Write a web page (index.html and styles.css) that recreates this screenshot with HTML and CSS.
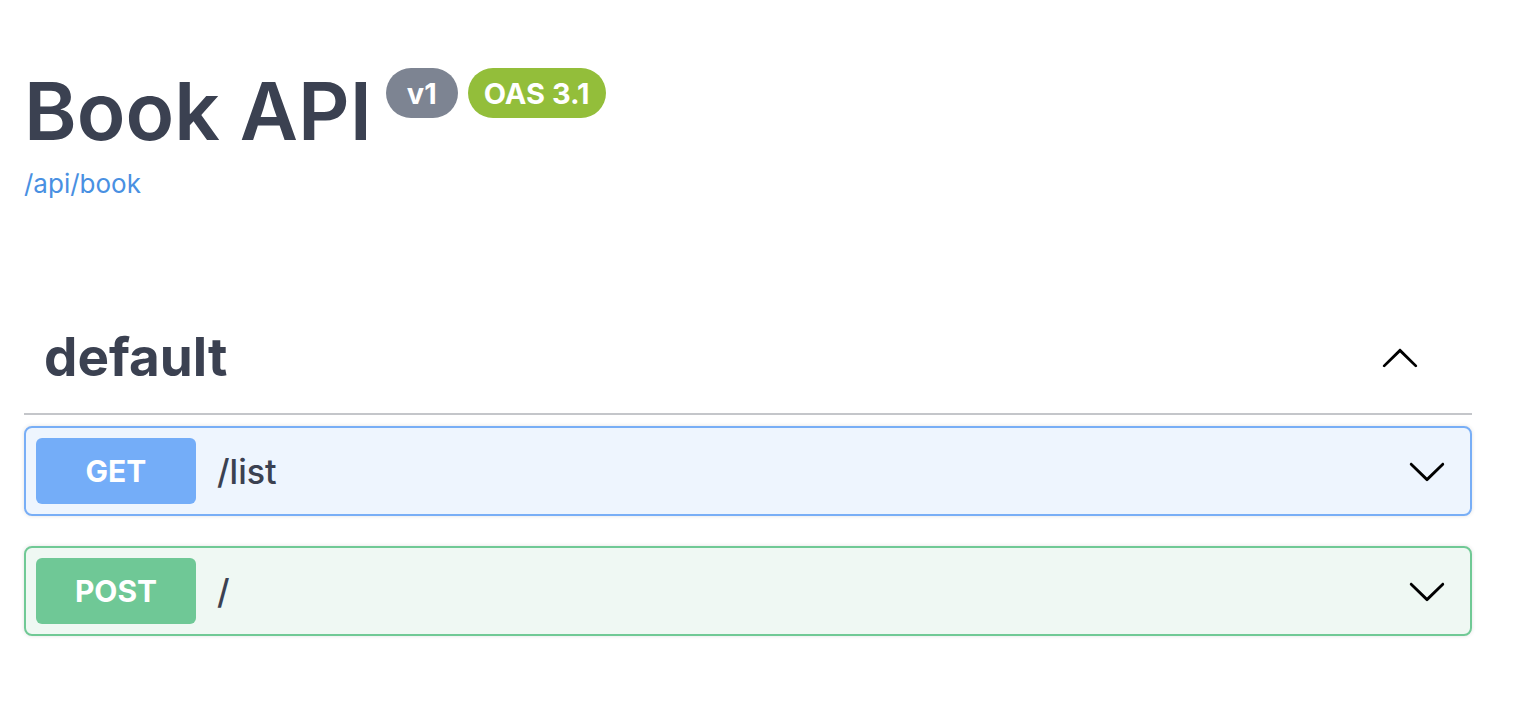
FILE: index.html
```html
<!DOCTYPE html>
<html lang="en">
<head>
    <meta charset="UTF-8">
    <meta name="viewport" content="width=device-width, initial-scale=1.0">
    <title>Book API</title>
    <link rel="stylesheet" href="styles.css">
</head>
<body>
    <div class="wrapper">
        <div class="info">
            <div class="title-row">
                <h2 class="title">Book API</h2>
                <span class="badge badge-version">v1</span>
                <span class="badge badge-oas">OAS 3.1</span>
            </div>
            <a class="base-url" href="#">/api/book</a>
        </div>

        <div class="tag-section">
            <h3 class="opblock-tag">
                <span>default</span>
                <svg class="arrow arrow-up" viewBox="0 0 20 20" width="40" height="40">
                    <path d="M17.418 14.908c.272.268.709.268.979 0s.27-.701 0-.969l-7.908-7.83c-.27-.268-.707-.268-.979 0l-7.908 7.83c-.27.268-.27.701 0 .969.271.268.709.268.979 0L10 7.767l7.418 7.141z"/>
                </svg>
            </h3>

            <div class="opblock opblock-get">
                <div class="summary">
                    <span class="method">GET</span>
                    <span class="path">/list</span>
                    <svg class="arrow" viewBox="0 0 20 20" width="40" height="40">
                        <path d="M17.418 6.109c.272-.268.709-.268.979 0s.271.701 0 .969l-7.908 7.83c-.27.268-.707.268-.979 0l-7.908-7.83c-.27-.268-.27-.701 0-.969.271-.268.709-.268.979 0L10 13.25l7.418-7.141z"/>
                    </svg>
                </div>
            </div>

            <div class="opblock opblock-post">
                <div class="summary">
                    <span class="method">POST</span>
                    <span class="path">/</span>
                    <svg class="arrow" viewBox="0 0 20 20" width="40" height="40">
                        <path d="M17.418 6.109c.272-.268.709-.268.979 0s.271.701 0 .969l-7.908 7.83c-.27.268-.707.268-.979 0l-7.908-7.83c-.27-.268-.27-.701 0-.969.271-.268.709-.268.979 0L10 13.25l7.418-7.141z"/>
                    </svg>
                </div>
            </div>
        </div>
    </div>
</body>
</html>
```

FILE: styles.css
```css
body {
    margin: 0;
    background: #fff;
    font-family: Inter, "Noto Sans", sans-serif;
    color: #3b4151;
}
.wrapper {
    width: 1448px;
    padding-left: 24px;
}
.title-row {
    display: flex;
    align-items: flex-start;
    padding-top: 68px;
}
.title {
    margin: 3px 14px 0 0;
    font-size: 80px;
    line-height: 1;
    font-weight: 600;
    color: #3b4151;
}
.badge {
    display: inline-flex;
    align-items: center;
    height: 50px;
    border-radius: 25px;
    color: #fff;
    font-size: 29px;
    font-weight: 700;
}
.badge-version {
    background: #7d8492;
    padding: 0 21px;
    margin-right: 10px;
}
.badge-oas {
    background: #93be3a;
    padding: 0 16px;
}
.base-url {
    display: block;
    margin-top: 17px;
    font-size: 26px;
    color: #4990e2;
    text-decoration: none;
}
.tag-section {
    margin-top: 108px;
}
.opblock-tag {
    display: flex;
    align-items: center;
    justify-content: space-between;
    margin: 0 0 11px;
    padding: 20px 40px 26px 20px;
    font-size: 53px;
    line-height: 60px;
    font-weight: 700;
    border-bottom: 2px solid rgba(59, 65, 81, 0.3);
}
.arrow {
    flex: none;
    fill: #000;
}
.arrow-up {
    margin-right: 12px;
}
.opblock {
    margin-bottom: 30px;
    border: 2px solid;
    border-radius: 8px;
    box-shadow: 0 0 4px rgba(0, 0, 0, 0.12);
}
.opblock-get { background: #eef5fe; border-color: #78aef6; }
.opblock-post { background: #eff8f3; border-color: #70c995; }
.summary {
    display: flex;
    align-items: center;
    padding: 10px;
}
.method {
    display: flex;
    align-items: center;
    justify-content: center;
    width: 160px;
    height: 66px;
    border-radius: 6px;
    color: #fff;
    font-size: 30px;
    font-weight: 700;
}
.opblock-get .method { background: #74adf8; }
.opblock-post .method { background: #6fc896; }
.path {
    flex: 1;
    padding-left: 21px;
    font-size: 34px;
    font-weight: 500;
    color: #3b4151;
}
.summary .arrow {
    margin-right: 13px;
}
```
